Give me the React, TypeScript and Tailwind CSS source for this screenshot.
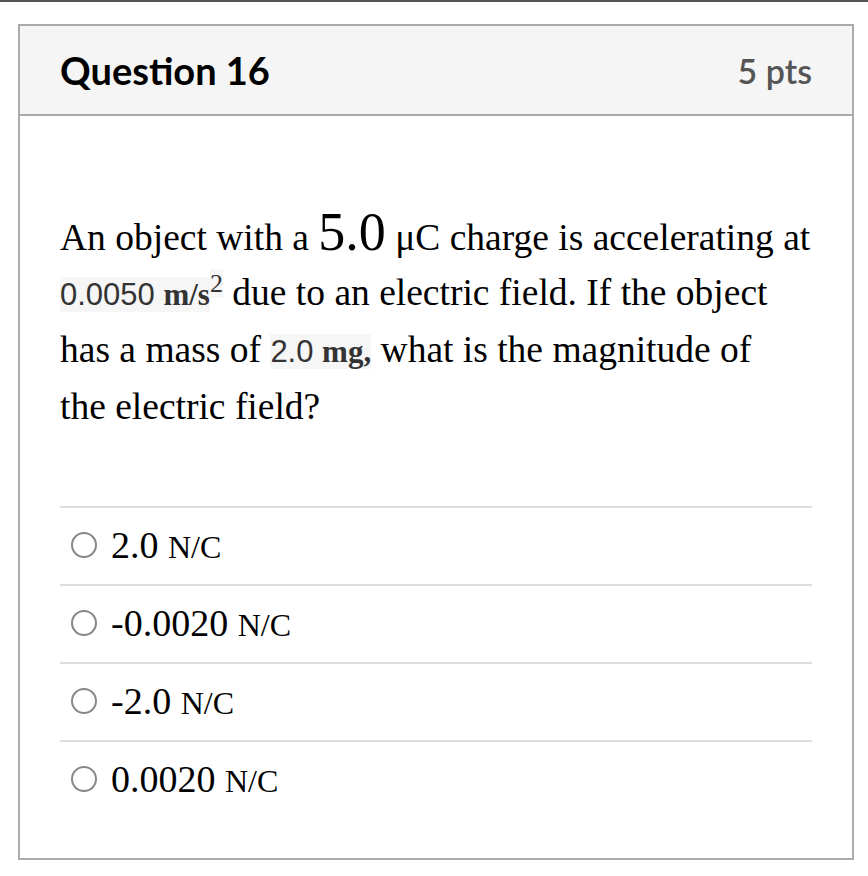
export default function App() {
  const answers: [string, string][] = [
    ['2.0', 'N/C'],
    ['-0.0020', 'N/C'],
    ['-2.0', 'N/C'],
    ['0.0020', 'N/C'],
  ];

  return (
    <div className="min-h-screen bg-white">
      <div className="h-[2px] bg-[#555]" />

      <div className="ml-[18px] mt-[22px] w-[836px] border-2 border-[#aaa]">
        {/* header */}
        <div className="flex h-[90px] items-center justify-between border-b-2 border-[#aaa] bg-[#f5f5f5] px-10 font-['Lato',sans-serif]">
          <h2 className="text-[38px] font-bold text-black">Question 16</h2>
          <span className="text-[34px] font-semibold text-[#555]">5 pts</span>
        </div>

        {/* body */}
        <div className="px-10 pt-[89px] pb-[40px] font-['Liberation_Serif',serif] text-black">
          <p className="text-[37.5px] leading-[55px]">
            An object with a <span className="text-[54px]">5.0</span> μC charge is accelerating at{' '}
            <span className="bg-[#f6f6f6] font-['Liberation_Sans',sans-serif] text-[31px] text-[#333]">0.0050 </span>
            <span className="bg-[#f6f6f6] text-[31px] font-bold text-[#333]">m/s</span>
            <sup className="bg-[#f6f6f6] text-[26px] text-[#333]">2</sup> due to an electric field. If the object has a
            mass of <span className="bg-[#f6f6f6] font-['Liberation_Sans',sans-serif] text-[31px] text-[#333]">2.0 </span>
            <span className="bg-[#f6f6f6] text-[31px] font-bold text-[#333]">mg,</span> what is the magnitude of
            <br />
            the electric field?
          </p>

          <div className="mt-[72px]">
            {answers.map(([v, u]) => (
              <div key={v} className="flex h-[78px] items-center gap-[14px] border-t-2 border-[#ddd] pl-[11px]">
                <span className="-mt-[3px] h-[26px] w-[26px] shrink-0 rounded-full border-2 border-[#888]" />
                <span className="-mt-[3px] text-[38px] leading-none">
                  {v} <span className="text-[32px]">{u}</span>
                </span>
              </div>
            ))}
          </div>
        </div>
      </div>
    </div>
  );
}
